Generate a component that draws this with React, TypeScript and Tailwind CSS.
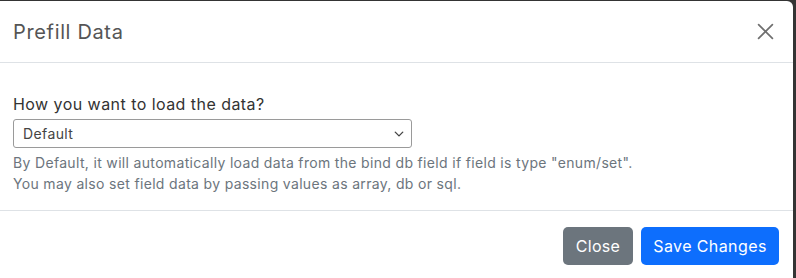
export default function App() {
  return (
    <div className="h-[278px] w-[796px] overflow-hidden bg-[#343434] pt-px" style={{ fontFamily: "Inter, 'Noto Sans', sans-serif" }}>
      <div className="w-[793px] rounded-tr-[6px] bg-white h-[300px]">
        {/* Header */}
        <div className="flex h-[62px] items-center justify-between border-b border-[#dee2e6] pl-[13px] pr-[16px]">
          <h2 className="text-[20px] font-normal text-[#555] tracking-[0.65px]">Prefill Data</h2>
          <button className="flex h-6 w-6 items-center justify-center text-[#6f6f6f]">
            <svg width="17" height="17" viewBox="0 0 16 16" fill="none" stroke="currentColor" strokeWidth="1.6" strokeLinecap="round">
              <path d="M1.5 1.5 L14.5 14.5 M14.5 1.5 L1.5 14.5" />
            </svg>
          </button>
        </div>

        {/* Body */}
        <div className="h-[147px] px-[13px] pt-[30px]">
          <label className="block text-[16px] leading-[22px] text-[#333] tracking-[0.45px]">How you want to load the data?</label>
          <div className="mt-[4px] flex h-[29px] w-[399px] items-center justify-between rounded-[3px] border border-[#9a9a9a] pl-[9px] pr-[7px]">
            <span className="text-[14px] text-[#444] tracking-[0.4px]">Default</span>
            <svg width="10" height="10" viewBox="0 0 16 16" fill="none" stroke="#444" strokeWidth="2.2" strokeLinecap="round" strokeLinejoin="round">
              <path d="M2 5 L8 11 L14 5" />
            </svg>
          </div>
          <p className="mt-[4px] text-[14px] leading-[21px] text-[#6c757d] tracking-[0.33px]">
            By Default, it will automatically load data from the bind db field if field is type "enum/set".
            <br />
            You may also set field data by passing values as array, db or sql.
          </p>
        </div>

        {/* Footer */}
        <div className="flex justify-end gap-2 border-t border-[#dee2e6] pr-[14px] pt-[16px]">
          <button className="h-[38px] w-[70px] rounded-[5px] bg-[#6c757d] text-[16px] text-white tracking-[0.3px]">Close</button>
          <button className="h-[38px] w-[138px] rounded-[5px] bg-[#0d6efd] text-[16px] text-white tracking-[0.4px]">Save Changes</button>
        </div>
      </div>
    </div>
  );
}
